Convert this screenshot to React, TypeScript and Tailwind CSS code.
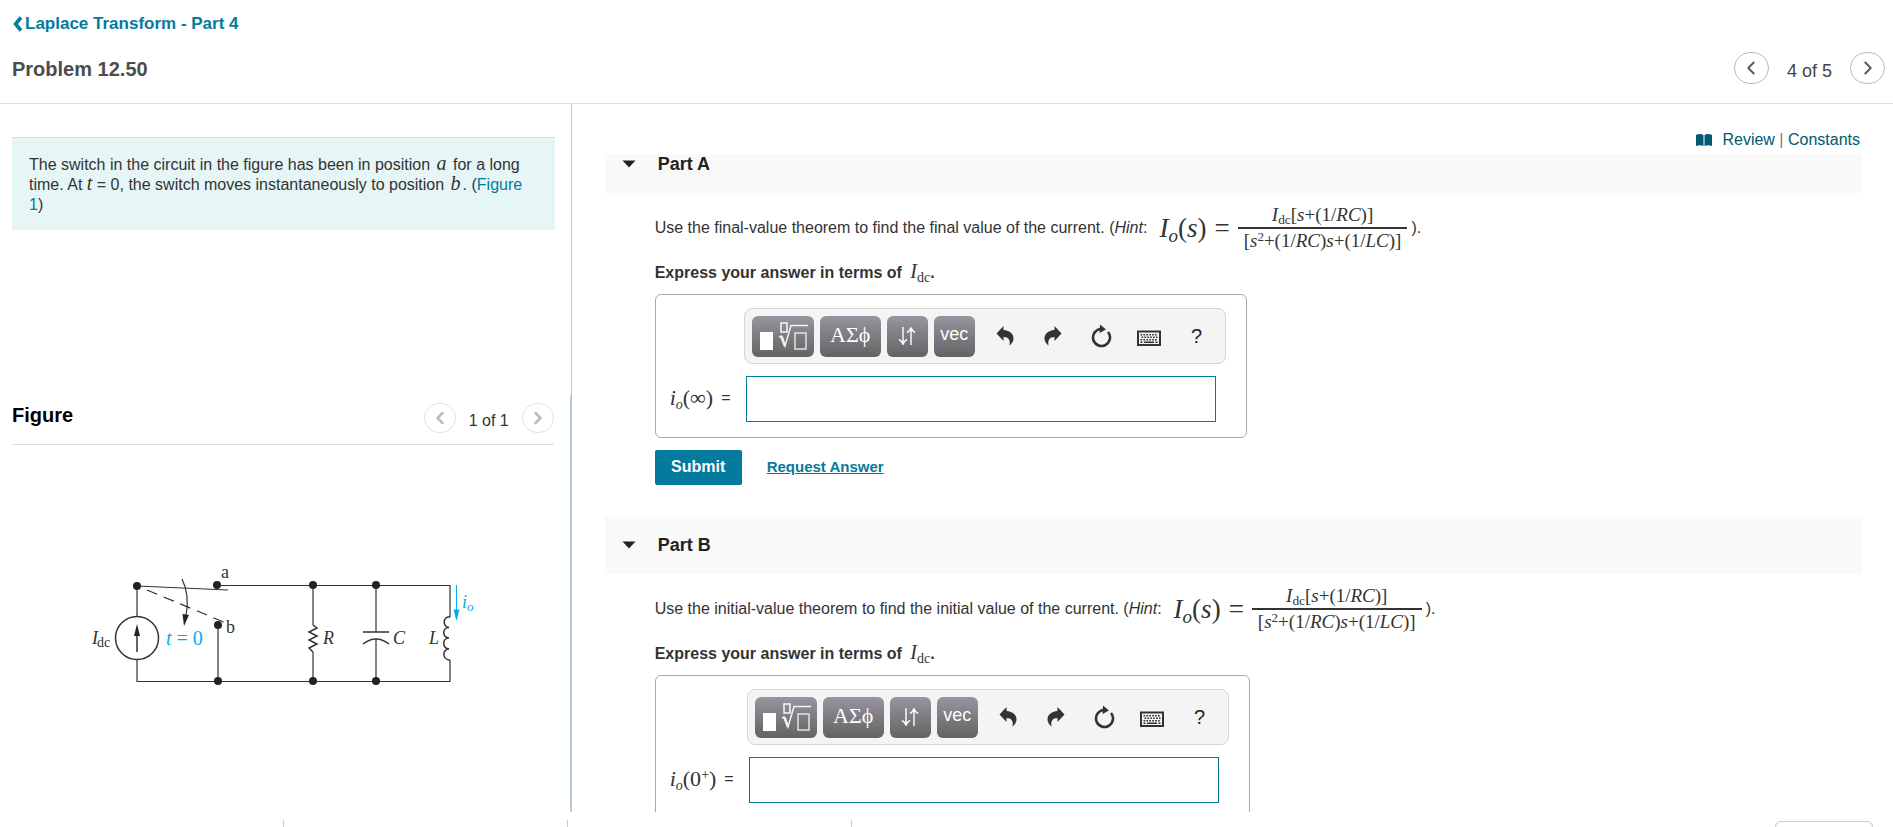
import type { ReactNode } from "react"
import { ChevronLeft, ChevronRight } from "lucide-react"

const mathFont = "font-['Liberation_Serif',serif]"

function Idc() {
  return (
    <span className={mathFont}>
      <i>I</i>
      <sub className="text-[70%]">dc</sub>
    </span>
  )
}

function TransferFunction() {
  return (
    <span className={`flex items-center ${mathFont}`}>
      <span className="text-[27px] leading-8">
        <i>I</i>
        <sub className="text-[19px]"><i>o</i></sub>(<i>s</i>)
      </span>
      <span className="mx-2 text-[27px] leading-8">=</span>
      <span className="flex flex-col items-stretch text-center text-[19px] leading-6">
        <span className="border-b-2 border-[#333]">
          <Idc />[<i>s</i>+(1/<i>RC</i>)]
        </span>
        <span className="px-1.5">
          [<i>s</i>
          <sup className="text-[13px]">2</sup>+(1/<i>RC</i>)<i>s</i>+(1/<i>LC</i>)]
        </span>
      </span>
    </span>
  )
}

function TemplateIcon() {
  return (
    <svg width="50" height="30" viewBox="0 0 50 30" fill="none" stroke="#f2f2f2">
      <rect x="2" y="11" width="13" height="18" fill="#fff" stroke="none" />
      <rect x="23" y="2" width="6" height="9" strokeWidth="1.6" />
      <path d="M21 16l2-1 4 10 6-20.500h17" strokeWidth="1.500" />
      <path d="M23.500 15.500L27 25" strokeWidth="2.500" />
      <rect x="37" y="12" width="11" height="16" strokeWidth="1.600" stroke="#ddd" />
    </svg>
  )
}

function SortArrowsIcon() {
  return (
    <svg width="18" height="20" viewBox="0 0 18 20" fill="none" stroke="#fff" strokeWidth="1.400">
      <path d="M5 1v17M1 13.500c2 1 3.500 3 4 5 .5-2 2-4 4-5" />
      <path d="M13 19V2M9 6.500c2-1 3.500-3 4-5 .5 2 2 4 4 5" />
    </svg>
  )
}

function UndoIcon({ flip = false }: { flip?: boolean }) {
  return (
    <svg width="18" height="20" viewBox="0 0 18 20" fill="#333">
      <path
        transform={flip ? "translate(18 0) scale(-1 1)" : undefined}
        d="M0.500 7.500L7.500 0V4C14 4.500 17.500 8 17.500 12.500C17.500 15.500 15.500 18 13.500 19.500C14.500 14 12.500 11 7.500 11V15Z"
      />
    </svg>
  )
}

function ResetIcon() {
  return (
    <svg width="22" height="24" viewBox="0 0 22 24" fill="none">
      <path d="M18 8A8.500 8.500 0 1 1 11 5" stroke="#333" strokeWidth="2.600" />
      <path d="M10 0.500L16 5.500L9.500 9Z" fill="#333" />
    </svg>
  )
}

function KeyboardIcon() {
  return (
    <svg width="24" height="16" viewBox="0 0 24 16" fill="none" stroke="#333">
      <rect x="1" y="1.500" width="22" height="13.500" strokeWidth="2" />
      <path d="M3.500 4.800h17M4.500 7.300h16M3.500 9.700h17" strokeWidth="1.500" strokeDasharray="1.700 1.200" />
      <path d="M3.500 12.300h2M7 12.300h10M18.500 12.300h2" strokeWidth="1.500" />
    </svg>
  )
}

const keyClass =
  "flex h-[41px] items-center justify-center rounded-md bg-linear-to-b from-[#9895a0] to-[#636363] text-white"

const tools = [
  { label: "Undo", icon: <UndoIcon /> },
  { label: "Redo", icon: <UndoIcon flip /> },
  { label: "Reset", icon: <ResetIcon /> },
  { label: "Keyboard shortcuts", icon: <span className="pt-1"><KeyboardIcon /></span> },
  { label: "Help", icon: <span className="text-xl">?</span> },
]

function Toolbar() {
  return (
    <div className="flex h-14 w-[482px] items-center rounded-lg border border-[#d6d6d6] bg-[#f4f4f4] pl-[7px]">
      <div className="mr-1.5 flex shrink-0 gap-1.5">
        <button type="button" aria-label="Templates" className={`${keyClass} w-[62px]`}>
          <TemplateIcon />
        </button>
        <button type="button" className={`${keyClass} w-[61px] pb-1 text-[22px] ${mathFont}`}>ΑΣϕ</button>
        <button type="button" aria-label="Arrows" className={`${keyClass} w-[41px]`}>
          <SortArrowsIcon />
        </button>
        <button type="button" className={`${keyClass} w-[41px] pb-1 text-lg`}>vec</button>
      </div>
      {tools.map((tool) => (
        <button key={tool.label} type="button" aria-label={tool.label} className="flex h-10 w-12 shrink-0 items-center justify-center text-[#222]">
          {tool.icon}
        </button>
      ))}
    </div>
  )
}

type PartProps = {
  id: string
  title: string
  question: string
  label: ReactNode
  labelWidth: string
  children?: ReactNode
}

function Part({ id, title, question, label, labelWidth, children }: PartProps) {
  return (
    <section className="mb-8">
      <h2 className="bg-[#f9f9f9]">
        <button type="button" className="flex h-[57px] w-full items-center pb-0.5 text-lg font-bold text-[#222]">
          <svg width="14" height="8" viewBox="0 0 14 8" className="mr-[22px] ml-[17px]">
            <path d="M0.500 0.500h13L7 7.500Z" fill="#222" />
          </svg>
          {title}
        </button>
      </h2>
      <div className="pl-[50px]">
        <div className="mt-2.5 flex h-[50px] items-center whitespace-nowrap">
          <p className="mr-3">
            {question} (<i>Hint</i>:
          </p>
          <TransferFunction />
          <span className="ml-1">).</span>
        </div>
        <p className="mt-1 mb-[9px] leading-6 font-bold">
          Express your answer in terms of <span className="ml-1 text-xl font-normal"><Idc /></span>.
        </p>
        <div className="flex h-36 w-fit rounded-md border border-[#aaa] pt-[13px] pr-5 pl-3.5">
          <label htmlFor={id} className={`${labelWidth} mt-[67px] flex h-[46px] items-center whitespace-nowrap`}>
            <span className={`mr-2 text-[22px] leading-6 ${mathFont}`}>{label}</span>=
          </label>
          <div>
            <Toolbar />
            <input id={id} type="text" className="mt-3 ml-0.5 h-[46px] w-[470px] border border-[#047a9c] bg-white px-2 outline-none" />
          </div>
        </div>
        {children}
      </div>
    </section>
  )
}

function Circuit() {
  return (
    <svg width="420" height="150" viewBox="0 0 420 150" fill="none" stroke="#333" role="img" aria-label="Circuit diagram">
      <g strokeWidth="1.200">
        <path d="M57 35V67M57 109V131.500H370V110M137 35.500H370V67" />
        <path d="M138 74V131M233 35V75M233 102V131M296 35V82M296 89V131" />
        <path d="M57 36L148 40" />
        <path d="M67 40L146 73" strokeDasharray="11 7" />
        <path d="M102 29Q110 45 106 66" />
      </g>
      <circle cx="57" cy="88" r="21.500" strokeWidth="1.500" />
      <path d="M57 102V82" strokeWidth="1.500" />
      <path d="M57 74L60 86H54Z" fill="#222" stroke="none" />
      <path d="M104 76L102.500 64L109 65Z" fill="#222" stroke="none" />
      <path d="M233 75l4 3-8 4 8 4-8 4 8 4-8 4 4 4" strokeWidth="1.500" />
      <path d="M283 82H309M283 94Q296 84 309 94" strokeWidth="1.500" />
      <path
        d="M370 67C363 66 362 76 369 77.500C362 77.500 362 87 369 88C362 88 362 98 369 99C362 99 362 110 370 110"
        strokeWidth="1.500"
      />
      <g fill="#222" stroke="none">
        <circle cx="57" cy="36" r="4" />
        <circle cx="137" cy="35" r="4" />
        <circle cx="138" cy="75" r="4" />
        <circle cx="233" cy="35" r="4" />
        <circle cx="296" cy="35" r="4" />
        <circle cx="138" cy="131" r="4" />
        <circle cx="233" cy="131" r="4" />
        <circle cx="296" cy="131" r="4" />
      </g>
      <path d="M376.500 35V62" stroke="#00aeef" />
      <path d="M376.500 71L373.500 59.500H379.500Z" fill="#00aeef" stroke="none" />
      <g className={mathFont} fill="#333" stroke="none" fontSize="18">
        <text x="141" y="28">a</text>
        <text x="146" y="83">b</text>
        <text x="12" y="94" fontStyle="italic">I</text>
        <text x="17" y="97" fontSize="14">dc</text>
        <text x="243" y="94" fontStyle="italic">R</text>
        <text x="313" y="94" fontStyle="italic">C</text>
        <text x="349" y="94" fontStyle="italic">L</text>
        <g fill="#00aeef">
          <text x="86" y="95" fontSize="20"><tspan fontStyle="italic">t</tspan> = 0</text>
          <text x="382" y="58" fontStyle="italic">i</text>
          <text x="387" y="61" fontSize="13" fontStyle="italic">o</text>
        </g>
      </g>
    </svg>
  )
}

export default function App() {
  return (
    <div className="flex h-screen flex-col overflow-hidden bg-white font-['Liberation_Sans',sans-serif] text-base text-[#333]">
      <header className="flex shrink-0 items-start justify-between border-b border-[#ddd] pr-2 pb-[11px] pl-3">
        <div>
          <a href="#" className="mt-2.5 flex items-center text-[17px] leading-7 font-bold text-[#047a9c]">
            <svg width="11" height="16" viewBox="0 0 11 16" className="mr-0.5">
              <path d="M9 1.500L3.500 8L9 14.500" fill="none" stroke="#047a9c" strokeWidth="3.500" />
            </svg>
            Laplace Transform - Part 4
          </a>
          <h1 className="mt-[17px] text-xl leading-7 font-bold text-[#4c4c4c]">Problem 12.50</h1>
        </div>
        <nav className="mt-[52px] flex h-10 text-[#555]">
          <button type="button" aria-label="Previous item" className="flex h-8 w-[35px] items-center justify-center rounded-full border border-[#bbb]">
            <ChevronLeft size={22} />
          </button>
          <span className="mx-[18px] pt-[3px] text-lg leading-8 text-[#444]">4 of 5</span>
          <button type="button" aria-label="Next item" className="flex h-8 w-[35px] items-center justify-center rounded-full border border-[#bbb]">
            <ChevronRight size={22} />
          </button>
        </nav>
      </header>

      <div className="flex min-h-0 flex-1">
        <aside className="flex w-[30.2%] shrink-0 flex-col">
          <div className="flex h-[291px] shrink-0 flex-col border-r border-[#b8c9da] pt-[33px] pr-4 pl-3">
            <div className="border-t border-[#d8dede] bg-[#e6f6f6] pt-[17px] pr-5 pb-[15px] pl-[17px] leading-5">
              The switch in the circuit in the figure has been in position{" "}
              <i className={`mx-0.5 text-xl leading-4 ${mathFont}`}>a</i> for a long time. At{" "}
              <i className={`text-xl leading-4 ${mathFont}`}>t</i> = 0, the switch moves instantaneously to position{" "}
              <i className={`mx-0.5 text-xl leading-4 ${mathFont}`}>b</i>. (
              <a href="#" className="text-[#047a9c]">Figure 1</a>)
            </div>
          </div>
          <div className="min-h-0 flex-1 border-r-2 border-[#b8c9da] pr-4 pl-3">
            <div className="flex h-[50px] justify-between border-b border-[#ddd] pt-2">
              <h2 className="text-xl leading-6 font-bold text-black">Figure</h2>
              <div className="flex">
                <button type="button" aria-label="Previous figure" disabled className="flex h-[30px] w-8 items-center justify-center rounded-full border border-[#e2e2e2] text-[#bbb]">
                  <ChevronLeft size={20} strokeWidth={3} />
                </button>
                <span className="mx-[13px] pt-1 leading-7">1 of 1</span>
                <button type="button" aria-label="Next figure" disabled className="flex h-[30px] w-8 items-center justify-center rounded-full border border-[#e2e2e2] text-[#bbb]">
                  <ChevronRight size={20} strokeWidth={3} />
                </button>
              </div>
            </div>
            <div className="mt-[105px] pl-[68px]">
              <Circuit />
            </div>
          </div>
        </aside>

        <main className="flex min-w-0 flex-1 flex-col pr-[31px] pl-[33px]">
          <div className="flex h-[50px] shrink-0 items-center justify-end pt-[21px] pr-0.5">
            <svg width="16" height="12" viewBox="0 0 16 12" className="mr-2.5" fill="#005a70">
              <path d="M0 1Q4-1 7.500 1V12Q4 10.500 0 12ZM8.500 1Q12-1 16 1V12Q12 10.500 8.500 12Z" />
            </svg>
            <p className="text-[#777]">
              <a href="#" className="text-[#005a70]">Review</a> | <a href="#" className="text-[#005a70]">Constants</a>
            </p>
          </div>
          {/* the list of parts is scrolled a little under the links */}
          <div className="min-h-0 flex-1 overflow-hidden">
            <div className="-mt-[18px]">
              <Part
                id="final-value"
                title="Part A"
                question="Use the final-value theorem to find the final value of the current."
                label={<><i>i</i><sub className="text-[14px]"><i>o</i></sub>(∞)</>}
                labelWidth="w-[74px]"
              >
                <div className="mt-3 flex items-center gap-[25px]">
                  <button type="button" className="h-[35px] w-[87px] rounded-xs bg-[#047a9c] pb-0.5 font-bold text-white">
                    Submit
                  </button>
                  <a href="#" className="text-[15px] font-bold text-[#047a9c] underline">
                    Request Answer
                  </a>
                </div>
              </Part>
              <Part
                id="initial-value"
                title="Part B"
                question="Use the initial-value theorem to find the initial value of the current."
                label={<><i>i</i><sub className="text-[14px]"><i>o</i></sub>(0<sup className="text-[14px]">+</sup>)</>}
                labelWidth="w-[77px]"
              />
            </div>
          </div>
        </main>
      </div>

      <footer className="flex h-[15px] shrink-0 items-end justify-between">
        <div className="flex h-[7px] w-[45%] divide-x divide-[#ccc] border-r border-[#ccc]">
          <div className="flex-1" />
          <div className="flex-1" />
          <div className="flex-1" />
        </div>
        <div className="mr-5 h-1.5 w-[98px] rounded-t-md border border-b-0 border-[#ccc]" />
      </footer>
    </div>
  )
}
